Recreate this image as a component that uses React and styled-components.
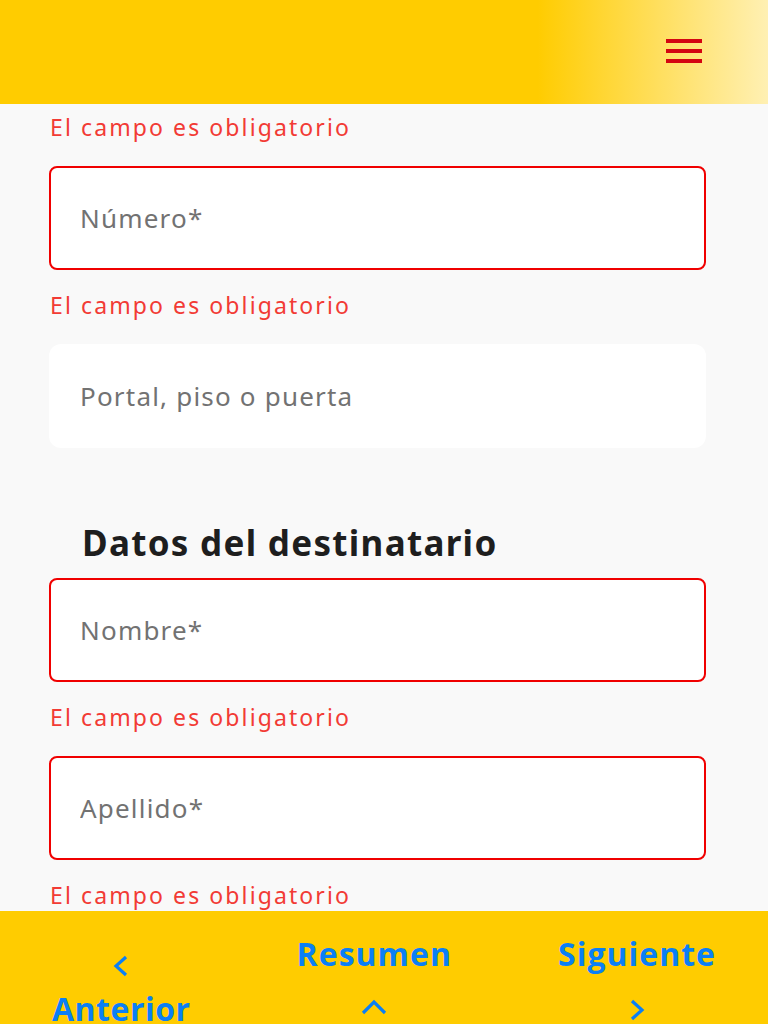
import React from "react";
import styled, { createGlobalStyle } from "styled-components";

const GlobalStyle = createGlobalStyle`
  html, body {
    margin: 0;
    padding: 0;
    background: #f9f9f9;
    font-family: "Noto Sans", "Open Sans", sans-serif;
  }
  * {
    box-sizing: border-box;
  }
`;

const Page = styled.div`
  display: flex;
  flex-direction: column;
  height: 100vh;
  overflow: hidden;
`;

const Header = styled.header`
  flex: 0 0 104px;
  display: flex;
  justify-content: flex-end;
  align-items: center;
  padding-right: 66px;
  background: linear-gradient(90deg, #ffcc00 70%, #fff0b3 100%);
`;

const MenuButton = styled.button`
  display: flex;
  flex-direction: column;
  gap: 6px;
  width: 36px;
  margin-top: -3px;
  padding: 0;
  border: 0;
  background: none;
  cursor: pointer;

  span {
    display: block;
    height: 4px;
    background: #d40511;
  }
`;

const Main = styled.main`
  flex: 1;
  overflow: hidden;
  padding: 8px 62px 0 49px;
`;

const Input = styled.input`
  display: block;
  width: 100%;
  height: 104px;
  padding: 0 29px;
  background: #fff;
  border: 2px solid ${(p) => (p.$invalid ? "#f00000" : "transparent")};
  border-radius: ${(p) => (p.$invalid ? "8px" : "12px")};
  font-family: inherit;
  font-size: 26px;
  letter-spacing: 1.2px;
  outline: none;

  &::placeholder {
    color: #727272;
  }
`;

const ErrorText = styled.p`
  margin: ${(p) => (p.$first ? "0" : "20px")} 0 24px 1px;
  font-size: 23px;
  line-height: 30px;
  letter-spacing: 2.1px;
  color: #f23b35;
`;

const SectionTitle = styled.h2`
  margin: 74px 0 14px 33px;
  font-size: 35px;
  line-height: 42px;
  font-weight: 700;
  letter-spacing: 1.3px;
  color: #1e1e1e;
`;

const Footer = styled.footer`
  flex: 0 0 113px;
  height: 113px;
  overflow: hidden;
  display: flex;
  justify-content: space-between;
  align-items: flex-start;
  padding: 24px 52px 0;
  background: #ffcc00;
`;

const NavItem = styled.a`
  display: flex;
  flex-direction: ${(p) => (p.$iconFirst ? "column-reverse" : "column")};
  align-items: center;
  flex-shrink: 0;
  gap: ${(p) => (p.$iconFirst ? "13px" : "26px")};
  margin-top: ${(p) => (p.$iconFirst ? "20px" : "0")};
  color: #0b7ff5;
  font-family: "Open Sans", "Noto Sans", sans-serif;
  font-size: 32px;
  line-height: 38px;
  font-weight: 700;
  letter-spacing: ${(p) => (p.$iconFirst ? "0.5px" : "1px")};
  text-decoration: none;

  svg {
    display: block;
  }
`;

const Chevron = ({ dir }) => {
  if (dir === "up") {
    return (
      <svg width="26" height="16" viewBox="0 0 26 16">
        <polyline points="2,14 13,3 24,14" fill="none" stroke="#0b7ff5" strokeWidth="3.2" />
      </svg>
    );
  }
  const pts = dir === "left" ? "13,2 3,11 13,20" : "3,2 13,11 3,20";
  return (
    <svg width="16" height="22" viewBox="0 0 16 22">
      <polyline points={pts} fill="none" stroke="#0b7ff5" strokeWidth="3.2" />
    </svg>
  );
};

function Field({ placeholder, required }) {
  return (
    <>
      <Input placeholder={placeholder} $invalid={required} />
      {required && <ErrorText>El campo es obligatorio</ErrorText>}
    </>
  );
}

export default function App() {
  return (
    <Page>
      <GlobalStyle />
      <Header>
        <MenuButton aria-label="Menú">
          <span />
          <span />
          <span />
        </MenuButton>
      </Header>
      <Main>
        <ErrorText $first>El campo es obligatorio</ErrorText>
        <Field placeholder="Número*" required />
        <Field placeholder="Portal, piso o puerta" />
        <SectionTitle>Datos del destinatario</SectionTitle>
        <Field placeholder="Nombre*" required />
        <Field placeholder="Apellido*" required />
      </Main>
      <Footer>
        <NavItem href="#" $iconFirst>
          <span>Anterior</span>
          <Chevron dir="left" />
        </NavItem>
        <NavItem href="#">
          <span>Resumen</span>
          <Chevron dir="up" />
        </NavItem>
        <NavItem href="#">
          <span>Siguiente</span>
          <Chevron dir="right" />
        </NavItem>
      </Footer>
    </Page>
  );
}
